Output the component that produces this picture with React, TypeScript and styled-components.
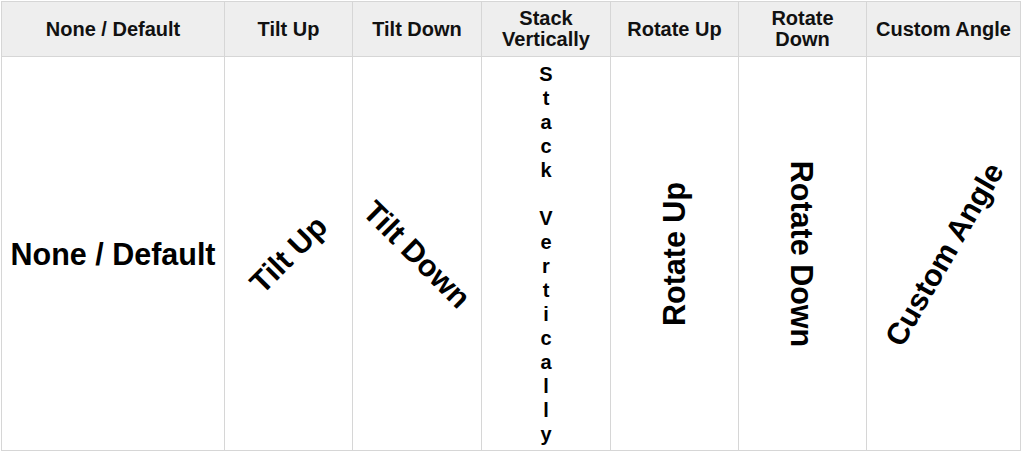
import React from "react";
import styled, { createGlobalStyle } from "styled-components";

type Column = {
  title: string;
  width: number;
  angle?: number;
  stack?: boolean;
};

const columns: Column[] = [
  { title: "None / Default", width: 223, angle: 0 },
  { title: "Tilt Up", width: 128, angle: -45 },
  { title: "Tilt Down", width: 129, angle: 45 },
  { title: "Stack Vertically", width: 129, stack: true },
  { title: "Rotate Up", width: 128, angle: -90 },
  { title: "Rotate Down", width: 128, angle: 90 },
  { title: "Custom Angle", width: 154, angle: -60 },
];

export default function App() {
  return (
    <>
      <GlobalStyle />
      <Sheet $widths={columns.map((c) => c.width)}>
        {columns.map((c) => (
          <HeaderCell key={"h" + c.title}>{c.title}</HeaderCell>
        ))}

        {columns.map((c) => (
          <BodyCell key={"b" + c.title}>
            {c.stack ? (
              <Stack>
                {c.title.split("").map((ch, i) => (
                  <Letter key={i}>{ch === " " ? "\u00a0" : ch}</Letter>
                ))}
              </Stack>
            ) : (
              <Label $angle={c.angle ?? 0}>{c.title}</Label>
            )}
          </BodyCell>
        ))}
      </Sheet>
    </>
  );
}

const GlobalStyle = createGlobalStyle`
  html, body {
    margin: 0;
    padding: 0;
    background: #fff;
  }
  body {
    font-family: "Liberation Sans", Arial, sans-serif;
    color: #000;
  }
`;

const Sheet = styled.div<{ $widths: number[] }>`
  display: grid;
  grid-template-columns: ${(p) => p.$widths.map((w) => `${w}px`).join(" ")};
  grid-template-rows: 55px 394px;
  margin: 1px 0 0 1px;
  width: max-content;
  border-top: 1px solid #d6d6d6;
  border-left: 1px solid #d6d6d6;
`;

const Cell = styled.div`
  box-sizing: border-box;
  border-right: 1px solid #d6d6d6;
  border-bottom: 1px solid #d6d6d6;
  display: flex;
  align-items: center;
  justify-content: center;
  overflow: visible;
`;

const HeaderCell = styled(Cell)`
  background: #eeeeee;
  padding: 0 8px;
  font-size: 20px;
  line-height: 21px;
  font-weight: 700;
  text-align: center;
  color: #111;
`;

const BodyCell = styled(Cell)`
  background: #fff;
`;

const Label = styled.span<{ $angle: number }>`
  display: block;
  flex: none;
  white-space: nowrap;
  font-size: 30.5px;
  line-height: 34px;
  font-weight: 700;
  color: #000;
  transform: rotate(${(p) => p.$angle}deg);
`;

const Stack = styled.div`
  display: flex;
  flex-direction: column;
  align-items: center;
`;

const Letter = styled.span`
  font-size: 20px;
  line-height: 24px;
  font-weight: 700;
  color: #000;
`;
